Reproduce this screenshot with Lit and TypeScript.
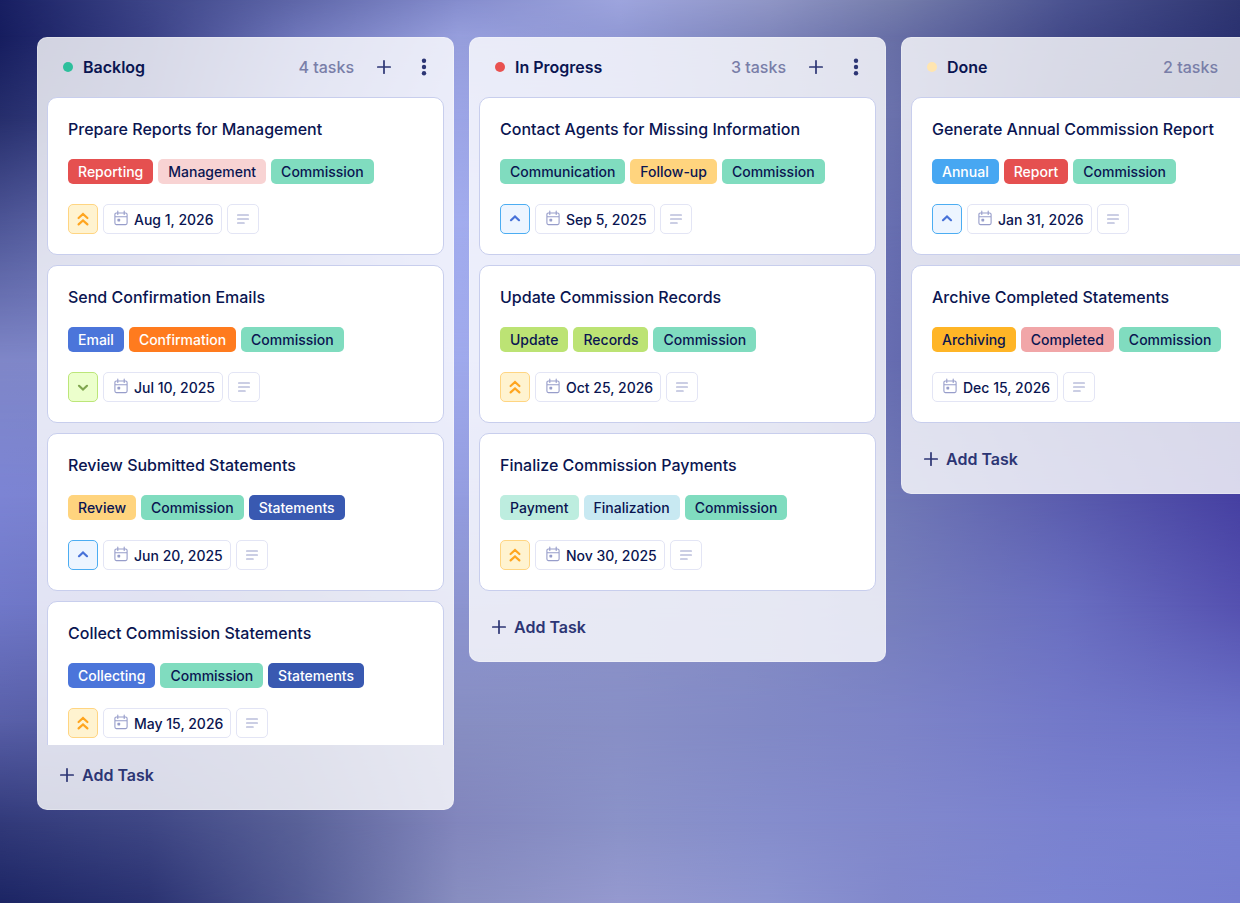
import { LitElement, html, css, svg, nothing } from "lit";
import { customElement, property } from "lit/decorators.js";

type Priority = "highest" | "high" | "low";
interface Tag { label: string; tone: string; }
interface Task { title: string; tags: Tag[]; priority?: Priority; due: string; }
interface Column { name: string; dot: string; tasks: Task[]; }

const tag = (label: string, tone: string): Tag => ({ label, tone });
const commission = tag("Commission", "mint");

const columns: Column[] = [
  { name: "Backlog", dot: "teal", tasks: [
    { title: "Prepare Reports for Management", tags: [tag("Reporting", "red"), tag("Management", "blush"), commission], priority: "highest", due: "Aug 1, 2026" },
    { title: "Send Confirmation Emails", tags: [tag("Email", "blue"), tag("Confirmation", "orange"), commission], priority: "low", due: "Jul 10, 2025" },
    { title: "Review Submitted Statements", tags: [tag("Review", "sand"), commission, tag("Statements", "navy")], priority: "high", due: "Jun 20, 2025" },
    { title: "Collect Commission Statements", tags: [tag("Collecting", "blue"), commission, tag("Statements", "navy")], priority: "highest", due: "May 15, 2026" },
  ] },
  { name: "In Progress", dot: "coral", tasks: [
    { title: "Contact Agents for Missing Information", tags: [tag("Communication", "mint"), tag("Follow-up", "sand"), commission], priority: "high", due: "Sep 5, 2025" },
    { title: "Update Commission Records", tags: [tag("Update", "lime"), tag("Records", "lime"), commission], priority: "highest", due: "Oct 25, 2026" },
    { title: "Finalize Commission Payments", tags: [tag("Payment", "foam"), tag("Finalization", "ice"), commission], priority: "highest", due: "Nov 30, 2025" },
  ] },
  { name: "Done", dot: "cream", tasks: [
    { title: "Generate Annual Commission Report", tags: [tag("Annual", "sky"), tag("Report", "red"), commission], priority: "high", due: "Jan 31, 2026" },
    { title: "Archive Completed Statements", tags: [tag("Archiving", "amber"), tag("Completed", "rose"), commission], due: "Dec 15, 2026" },
  ] },
];

/* Colour mesh of the backdrop: each row is a horizontal gradient that fades into the next. */
const meshStops = [0, 12, 24, 37, 50, 62, 72, 86, 100];
const meshRows: { at: number; colors: string[] }[] = [
  { at: 0, colors: ["#181f62", "#3d4588", "#5f67a9", "#858dce", "#9ea5de", "#9096c6", "#767eac", "#4b5391", "#2f3671"] },
  { at: 4, colors: ["#161d5f", "#3a4186", "#6e76ba", "#969edc", "#9098d4", "#7f86bb", "#686fa6", "#424988", "#2a3170"] },
  { at: 13, colors: ["#262e6c", "#3f478e", "#7a83c4", "#9ca5e6", "#9199d8", "#7c84bc", "#6a71ac", "#3a4180", "#262d64"] },
  { at: 25, colors: ["#4f5798", "#6a72b6", "#8790d2", "#a2acee", "#98a2e4", "#7f87c4", "#676eb0", "#444b8c", "#2c336c"] },
  { at: 40, colors: ["#7f87c8", "#8088cc", "#8c95d8", "#9fa9ec", "#98a1e0", "#7c84c4", "#666cb0", "#4c5298", "#393c88"] },
  { at: 55, colors: ["#7c84d4", "#7a82cc", "#828aca", "#949de0", "#8c94cc", "#8088c0", "#7078b6", "#5a5cae", "#4640a2"] },
  { at: 67, colors: ["#7078c9", "#6a71bc", "#7880b8", "#8c94d0", "#8a91c8", "#838bc4", "#767ebc", "#696ec0", "#5551b0"] },
  { at: 80, colors: ["#585fa8", "#5259a0", "#666da4", "#878ec2", "#888fc6", "#8189c6", "#7d84c8", "#7379c9", "#6c72c8"] },
  { at: 91, colors: ["#323a7a", "#3f4785", "#596198", "#8286bd", "#8a92c8", "#858dcc", "#8188cc", "#7a82d0", "#7880d2"] },
  { at: 100, colors: ["#1c2564", "#2a3271", "#525a94", "#888ec0", "#9599cf", "#8c94d0", "#8188cc", "#7b84d2", "#767ed0"] },
];

const plusIcon = svg`<svg class="icon" width="16" height="16" viewBox="0 0 16 16" aria-hidden="true"><path d="M8 1.8v12.4M1.8 8h12.4" fill="none" stroke="currentColor" stroke-width="1.7" stroke-linecap="round"/></svg>`;
const dotsIcon = svg`<svg class="icon" width="6" height="18" viewBox="0 0 6 18" aria-hidden="true"><circle cx="3" cy="2.8" r="2.2"/><circle cx="3" cy="9" r="2.2"/><circle cx="3" cy="15.2" r="2.2"/></svg>`;
const calendarIcon = svg`<svg class="icon" width="14" height="18" viewBox="0 0 14 18" aria-hidden="true"><path d="M2.4 3h9.2q1.5 0 1.5 1.5v8.6q0 1.5-1.5 1.5H2.4q-1.5 0-1.5-1.5V4.5Q.9 3 2.4 3ZM.9 6.8h12.2M3.8 1v3.4M10.2 1v3.4" fill="none" stroke="currentColor" stroke-width="1.1" stroke-linecap="round"/><rect x="3.4" y="8.8" width="2.8" height="2.6" rx=".6" fill="currentColor"/></svg>`;
const linesIcon = svg`<svg class="icon" width="12" height="10" viewBox="0 0 12 10" aria-hidden="true"><path d="M.6 1h10.8M.6 5h10.8M.6 9h6.6" fill="none" stroke="currentColor" stroke-width="1.2" stroke-linecap="round"/></svg>`;
const priorityPaths: Record<Priority, string> = {
  highest: "M2.6 6 7 2l4.4 4M2.6 12.4 7 8.4l4.4 4",
  high: "M3 8.2 7 4.4l4 3.8",
  low: "M3 5.8l4 3.8 4-3.8",
};

@customElement("task-card")
export class TaskCard extends LitElement {
  @property({ attribute: false }) task!: Task;

  static styles = css`
    :host { display: block; }
    .card { box-sizing: border-box; padding: 19px 20px 20px; background: #fff; border: 1px solid #c8ceed; border-radius: 10px; color: #0a1551; }
    .title { margin: 0; font-size: 16px; line-height: 24px; font-weight: 500; white-space: nowrap; }
    .tags { display: flex; gap: 5px; margin: 18px 0 0; padding: 0; list-style: none; }
    .tag { padding: 0 10px; border-radius: 5px; font-size: 14px; line-height: 25px; font-weight: 500; white-space: nowrap; }
    .meta { display: flex; gap: 5px; margin-top: 20px; }
    .chip { box-sizing: border-box; display: inline-flex; align-items: center; justify-content: center; height: 30px; margin: 0; padding: 0; border: 1px solid #e3e5f5; border-radius: 5px; background: #fff; font: inherit; font-size: 14px; font-weight: 500; color: #0a1551; white-space: nowrap; }
    .icon { display: block; flex: none; }
    .date { gap: 6px; padding: 0 7px 0 10px; }
    .date .icon, .notes { color: #979dca; }
    .notes { width: 32px; }
    .priority { width: 30px; }
    .priority.highest { background: #fff3d0; border-color: #ffd582; color: #ffa51f; }
    .priority.high { background: #edf5ff; border-color: #4cadf2; color: #4872d8; }
    .priority.low { background: #ecffcc; border-color: #bce679; color: #80a64f; }
    .red { background: #e55050; color: #fff; }
    .blush { background: #f8d3d3; }
    .mint { background: #80dcbf; }
    .blue { background: #4b75da; color: #fff; }
    .orange { background: #ff7b1e; color: #fff; }
    .sand { background: #ffd47e; }
    .navy { background: #3959b1; color: #fff; }
    .lime { background: #bce374; }
    .foam { background: #bdeddf; }
    .ice { background: #c8e9f2; }
    .sky { background: #47a7f2; color: #fff; }
    .amber { background: #ffb526; }
    .rose { background: #f1a6a8; }
  `;

  render() {
    const { title, tags, priority, due } = this.task;
    return html`<article class="card">
      <h3 class="title">${title}</h3>
      <ul class="tags">${tags.map((t) => html`<li class="tag ${t.tone}">${t.label}</li>`)}</ul>
      <div class="meta">
        ${priority ? html`<button class="chip priority ${priority}" aria-label="Priority: ${priority}">
          <svg class="icon" width="14" height="14" viewBox="0 0 14 14" aria-hidden="true"><path d=${priorityPaths[priority]} fill="none" stroke="currentColor" stroke-width="2.2" stroke-linecap="round"/></svg>
        </button>` : nothing}
        <button class="chip date">${calendarIcon}<span>${due}</span></button>
        <button class="chip notes" aria-label="Description">${linesIcon}</button>
      </div>
    </article>`;
  }
}

@customElement("board-column")
export class BoardColumn extends LitElement {
  @property({ attribute: false }) column!: Column;

  static styles = css`
    :host { display: flex; min-height: 0; }
    .column { box-sizing: border-box; display: flex; flex-direction: column; width: 417px; min-height: 0; padding: 0 9px; border: 1px solid rgba(255, 255, 255, 0.25); border-radius: 10px; background: rgba(255, 255, 255, 0.8); color: #0a1551; }
    .head { box-sizing: border-box; display: flex; align-items: center; flex: none; height: 59px; padding: 0 10px 2px 16px; font-size: 16px; }
    .dot { width: 10px; height: 10px; margin-right: 10px; border-radius: 50%; }
    .teal { background: #2dbf9c; }
    .coral { background: #e95150; }
    .cream { background: #ffe5b0; }
    .name { flex: 1; margin: 0; font-size: 16px; font-weight: 600; }
    .count { margin-right: 14px; color: #797ea8; font-weight: 500; }
    .action { display: flex; align-items: center; justify-content: center; width: 32px; height: 32px; padding: 0; border: 0; background: none; color: #2c3574; }
    .action + .action { width: 20px; margin-left: 14px; }
    .icon { display: block; flex: none; fill: currentColor; }
    .list { display: flex; flex-direction: column; gap: 10px; flex: 0 1 auto; min-height: 0; padding-bottom: 6px; overflow: hidden; }
    .add { display: flex; align-items: center; gap: 7px; flex: none; align-self: flex-start; margin: 14px 0 18px; padding: 0 0 0 12px; border: 0; background: none; height: 32px; font: inherit; font-size: 16px; font-weight: 600; color: #2c3574; }
  `;

  render() {
    const { name, dot, tasks } = this.column;
    return html`<section class="column">
      <header class="head">
        <span class="dot ${dot}"></span>
        <h2 class="name">${name}</h2>
        <span class="count">${tasks.length} tasks</span>
        <button class="action" aria-label="Add task to ${name}">${plusIcon}</button>
        <button class="action" aria-label="${name} menu">${dotsIcon}</button>
      </header>
      <div class="list">${tasks.map((t) => html`<task-card .task=${t}></task-card>`)}</div>
      <button class="add">${plusIcon}<span>Add Task</span></button>
    </section>`;
  }
}

@customElement("app-root")
export class AppRoot extends LitElement {
  static styles = css`
    :host { display: block; font-family: Inter, "Liberation Sans", sans-serif; }
    .page { position: relative; box-sizing: border-box; height: 100vh; overflow: hidden; padding: 37px 37px 93px; }
    .mesh { position: absolute; inset: 0; }
    .board { position: relative; display: flex; align-items: flex-start; gap: 15px; width: max-content; height: 100%; }
    .slot { max-height: 100%; }
  `;

  private meshStyle(i: number): string {
    const { at, colors } = meshRows[i];
    const fill = `background:linear-gradient(90deg,${colors.map((c, n) => `${c} ${meshStops[n]}%`).join(",")})`;
    return i === 0 ? fill : `${fill};mask-image:linear-gradient(180deg,transparent ${meshRows[i - 1].at}%,#000 ${at}%)`;
  }

  render() {
    return html`<main class="page">
      ${meshRows.map((_, i) => html`<div class="mesh" style=${this.meshStyle(i)}></div>`)}
      <div class="board">${columns.map((c) => html`<board-column class="slot" .column=${c}></board-column>`)}</div>
    </main>`;
  }
}
